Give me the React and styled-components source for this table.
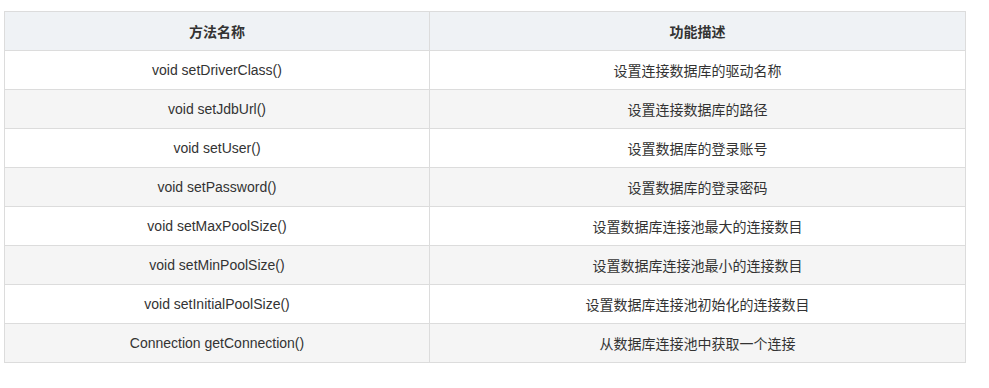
import styled, { createGlobalStyle } from 'styled-components';

const GlobalStyle = createGlobalStyle`
  html, body {
    margin: 0;
    padding: 0;
    background: #ffffff;
  }
  body {
    font-family: "Liberation Sans", Arial, "Noto Sans CJK SC", sans-serif;
  }
`;

const Page = styled.div`
  padding: 11px 23px 0 4px;
`;

const Table = styled.table`
  width: 962px;
  border-collapse: collapse;
  table-layout: fixed;
  border: 1px solid #dcdcdc;
  font-size: 14px;
  color: #333333;
`;

const HeadCell = styled.th`
  height: 39px;
  padding: 0 8px;
  background: #eff2f5;
  border: 1px solid #dcdcdc;
  font-weight: bold;
  text-align: center;
  box-sizing: border-box;
`;

const Row = styled.tr`
  background: ${props => (props.$striped ? '#f5f5f5' : '#ffffff')};
`;

const Cell = styled.td`
  height: 39px;
  padding: 0 8px;
  border: 1px solid #dcdcdc;
  text-align: center;
  box-sizing: border-box;
`;

const rows = [
  ['void setDriverClass()', '设置连接数据库的驱动名称'],
  ['void setJdbUrl()', '设置连接数据库的路径'],
  ['void setUser()', '设置数据库的登录账号'],
  ['void setPassword()', '设置数据库的登录密码'],
  ['void setMaxPoolSize()', '设置数据库连接池最大的连接数目'],
  ['void setMinPoolSize()', '设置数据库连接池最小的连接数目'],
  ['void setInitialPoolSize()', '设置数据库连接池初始化的连接数目'],
  ['Connection getConnection()', '从数据库连接池中获取一个连接'],
];

const App = () => {
  return (
    <Page>
      <GlobalStyle />
      <Table>
        <colgroup>
          <col style={{ width: '425px' }} />
          <col />
        </colgroup>
        <thead>
          <tr>
            <HeadCell>方法名称</HeadCell>
            <HeadCell>功能描述</HeadCell>
          </tr>
        </thead>
        <tbody>
          {rows.map(([method, desc], i) => (
            <Row key={method} $striped={i % 2 === 1}>
              <Cell>{method}</Cell>
              <Cell>{desc}</Cell>
            </Row>
          ))}
        </tbody>
      </Table>
    </Page>
  );
};

export default App;
